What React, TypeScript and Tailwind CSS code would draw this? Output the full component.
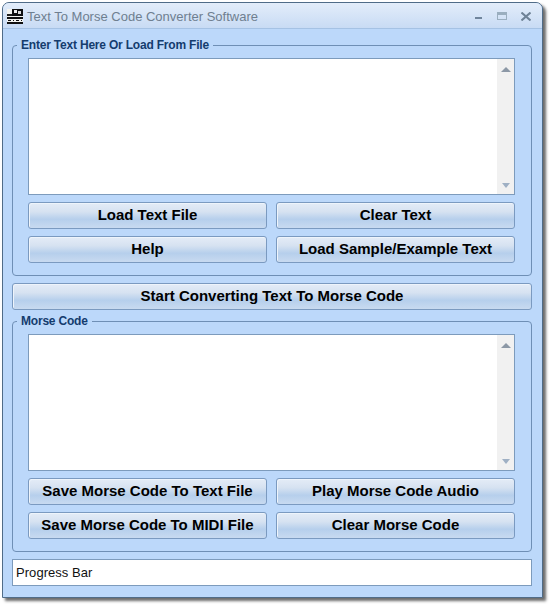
const Btn = ({ label, className = '' }: { label: string; className?: string }) => (
  <button className={`flex h-[27px] items-center justify-center rounded-[3px] border border-[#7b9ac0] bg-[linear-gradient(#e4ecf7_0%,#d6e2f1_35%,#b6cfec_65%,#c8daf0_100%)] text-[15px] font-bold text-black shadow-[inset_1px_1px_0_#eef4fb] ${className}`}>
    {label}
  </button>
);

const TextBox = () => (
  <div className="flex h-[137px] w-[487px] justify-end border border-[#7d9bbc] bg-white">
    <div className="flex w-[17px] flex-col items-center justify-between bg-[#f1f1f1] pt-[8px] pb-[6px]">
      <div className="h-0 w-0 border-x-[5px] border-b-[5px] border-x-transparent border-b-[#8c98a6]" />
      <div className="h-0 w-0 border-x-[4px] border-t-[5px] border-x-transparent border-t-[#9fb0c4]" />
    </div>
  </div>
);

const Panel = ({ title, labels }: { title: string; labels: string[] }) => (
  <fieldset className="h-[238px] rounded-[4px] border border-[#6f8fb5] px-[15px] pb-[11px]">
    <legend className="-ml-[11px] px-[4px] text-[12px] leading-[14px] font-bold tracking-[-0.2px] text-[#143c6e]">
      {title}
    </legend>
    <div className="mt-[6px] flex flex-col">
      <TextBox />
      <div className="mt-[7px] grid grid-cols-[239px_239px] gap-x-[9px] gap-y-[7px]">
        {labels.map((label) => (
          <Btn key={label} label={label} />
        ))}
      </div>
    </div>
  </fieldset>
);

export default function App() {
  return (
    <div className="h-[605px] w-[550px] bg-white pt-[2px] pl-[2px] font-['Liberation_Sans',sans-serif]">
      <div className="flex h-[596px] w-[541px] flex-col overflow-hidden rounded-t-[7px] border border-[#506c88] bg-[#bcd8fa] shadow-[3px_3px_3px_#6b6b6b]">
        <div className="flex h-[26px] shrink-0 items-center border-b border-[#a5c2e4] bg-[linear-gradient(#e3edfa,#c8dbf4)] pr-[11px] pl-[3px]">
          <svg width="18" height="18" viewBox="0 0 18 18" className="shrink-0">
            <rect x="1" y="2" width="16" height="15" fill="#f4f4f0" />
            <rect x="6" y="2" width="11" height="7" fill="#111" />
            <rect x="8" y="3" width="3" height="3" fill="#eee" />
            <rect x="12" y="4" width="3" height="3" fill="#ddd" />
            <rect x="1" y="7" width="5" height="2" fill="#222" />
            <rect x="1" y="10" width="16" height="2" fill="#111" />
            <path d="M2 13.5H5M7 13.5H8M10 13.5H13M15 13.5H16" stroke="#111" />
            <rect x="1" y="15" width="16" height="2" fill="#111" />
          </svg>
          <span className="mt-[2px] ml-[3px] text-[13px] text-[#6f7f90]">
            Text To Morse Code Converter Software
          </span>
          <div className="mt-[1px] ml-auto flex items-center">
            <div className="mt-[4px] h-[2px] w-[7px] bg-[#70859c]" />
            <div className="ml-[15px] h-[8px] w-[10px] border border-t-[3px] border-[#9aaebf]" />
            <svg width="10" height="9" viewBox="0 0 10 9" className="ml-[14px]">
              <path d="M0.5 0.5 L9.5 8.5 M9.5 0.5 L0.5 8.5" stroke="#6f8397" strokeWidth="2" />
            </svg>
          </div>
        </div>
        <div className="flex flex-col pt-[9px] pr-[10px] pl-[9px]">
          <Panel
            title="Enter Text Here Or Load From File"
            labels={['Load Text File', 'Clear Text', 'Help', 'Load Sample/Example Text']}
          />
          <Btn label="Start Converting Text To Morse Code" className="mt-[7px] w-full" />
          <div className="mt-[4px]">
            <Panel
              title="Morse Code"
              labels={[
                'Save Morse Code To Text File',
                'Play Morse Code Audio',
                'Save Morse Code To MIDI File',
                'Clear Morse Code',
              ]}
            />
          </div>
          <div className="mt-[7px] flex h-[27px] items-center border border-[#7d9bbc] bg-white pl-[3px] text-[13px] tracking-[0.05px] text-[#111]">
            Progress Bar
          </div>
        </div>
      </div>
    </div>
  );
}
